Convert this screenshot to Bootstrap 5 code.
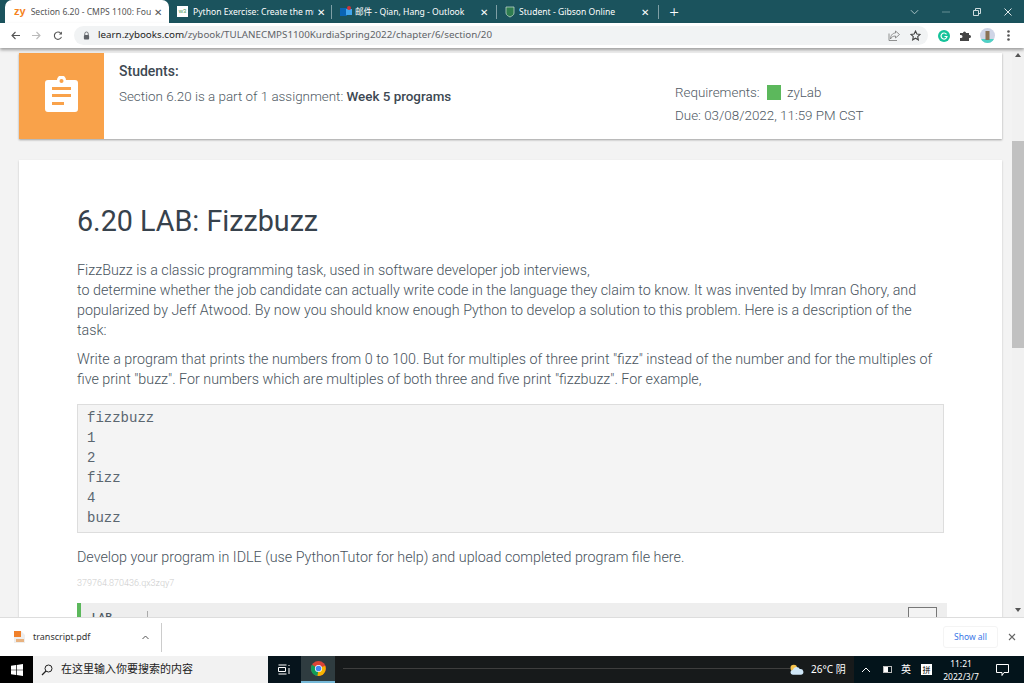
<!DOCTYPE html>
<html lang="en">
<head>
<meta charset="utf-8">
<title>6.20 LAB: Fizzbuzz</title>
<link href="https://cdn.jsdelivr.net/npm/bootstrap@5.3.0/dist/css/bootstrap.min.css" rel="stylesheet">
<style>
html,body{height:100%;overflow:hidden;margin:0}
body{font-family:"Liberation Sans",sans-serif;background:#f3f3f3}
.win{width:1024px;height:683px}
.tabstrip{height:23px;background:#1b535d;color:#fff;font-family:"Noto Sans","Noto Sans CJK SC",sans-serif;font-size:8.600px;flex:none}
.chrometab{height:23px;display:flex;align-items:center;position:relative;white-space:nowrap;overflow:hidden;flex:none}
.chrometab .ttl{overflow:hidden;flex:1;min-width:0;padding-top:1px}
.chrometab .cls{width:14px;font-size:10px;text-align:center;line-height:1;flex:none}
.t1{width:164px;margin-left:5px;padding:0 4px 0 9px;background:#fff;color:#555;border-radius:7px 7px 0 0}
.t1 .ttl{margin-left:5px}
.t2{width:162px;padding:0 3px 0 8px}
.t2 .ttl{margin-left:5px}
.t3{width:164px;padding:0 5px 0 8px}
.t3 .ttl{margin-left:3px}
.t4{width:161px;padding:0 6px 0 8px}
.t4 .ttl{margin-left:4px}
.w3box{width:11px;height:11px;background:#fff;color:#4a9a5a;font-size:6px;line-height:11px;text-align:center;font-family:"Liberation Sans",sans-serif;flex:none}
.sepv{width:1px;height:14px;background:#7f9fa5;flex:none}
.plus{width:30px;text-align:center;font-size:17px;font-weight:300;line-height:1}
.winbtns{margin-left:auto;width:114px;padding-right:12px}
.toolbar{height:25px;background:#fff;flex:none;position:relative;z-index:3;box-shadow:0 2px 3px rgba(0,0,0,.35);padding:3px 0 0 11px}
.urlbar{width:854px;height:19px;margin-left:11px;background:#f1f3f4;border-radius:10px;font-family:"Noto Sans",sans-serif;font-size:9.800px;color:#5f6368;padding:0 7px 0 9px}
.urlbar b{font-weight:400;color:#222}
.viewport{flex:1;min-height:0;position:relative;overflow:hidden;background:#f3f3f3}
.pagecol{width:983px;margin-left:19px;font-family:Roboto,sans-serif;color:#4f5a64}
.infocard{height:86px;margin-top:5px;background:#fff;box-shadow:0 1px 2px rgba(0,0,0,.35)}
.orangebox{width:85px;background:#f9a24a;flex:none;padding-bottom:4px}
.infomain{width:556px;padding:9px 0 0 15px;font-size:13.400px;font-weight:300}
.infomain h6{font-size:14px;font-weight:500;margin:0 0 7px;line-height:18px;color:#3d4852}
.infomain strong{font-weight:500;color:#3d4852}
.inforeq{padding-top:28px;font-size:13.400px;font-weight:300;line-height:23px;padding-left:15px}
.greensq{display:inline-block;width:14px;height:15px;background:#5cb85c;vertical-align:-3px;margin:0 6px 0 4px}
.maincard{margin-top:21px;height:480px;background:#fff;box-shadow:0 1px 2px rgba(0,0,0,.2);padding:44px 58px 0 58px}
.maincard h1{font-size:28.700px;font-weight:400;line-height:34px;margin:0 0 22px;color:#37424c}
.bodytxt{font-size:14.300px;font-weight:300;line-height:20px;margin:0 0 9px;color:#48535d}
.bodylast{margin-bottom:15px}
.bodydev{margin-bottom:10px}
.codebox{width:867px;height:129px;background:#f4f4f4;border:1px solid #ddd;padding:3px 9px;font-family:"Liberation Mono",monospace;font-size:14px;line-height:20px;margin:0 0 14px;color:#5a6670;overflow:hidden}
.hashid{font-size:9px;color:#ccc;line-height:12px;font-weight:300;margin-bottom:14px}
.labbar{width:870px;height:30px;background:#eee;border-left:4px solid #5cb85c;padding:8px 0 0 11px;font-size:11px;line-height:14px;font-weight:500;position:relative}
.labsep{display:inline-block;width:1px;height:20px;background:#aaa;margin-left:35px;vertical-align:top}
.labchk{position:absolute;right:10px;top:4px;width:29px;height:22px;border:1px solid #777;background:#f3f3f3}
.vscroll{position:absolute;right:0;top:0;bottom:0;width:12px;background:#f1f1f1}
.vthumb{position:absolute;left:0;right:0;top:93px;height:207px;background:#c1c1c1}
.varr{position:absolute;left:3px;width:0;height:0;border-left:3px solid transparent;border-right:3px solid transparent}
.dlbar{height:39px;background:#fff;flex:none;position:relative;z-index:2;border-top:1px solid #ddd;font-family:"Noto Sans",sans-serif;font-size:9px;color:#333}
.dlitem{width:162px;height:29px;border-right:1px solid #ccc;padding-left:14px}
.showall{color:#3b78e7;border:1px solid #f4f4f4;border-radius:3px;padding:4px 10px;margin-right:3px;line-height:12px;font-size:8.500px}
.taskbar{height:27px;background:#06141c;flex:none;color:#fff;font-size:10px;font-family:"Noto Sans","Noto Sans CJK SC",sans-serif}
.startbtn{width:33px;flex:none;background:#000}
.searchbox{width:235px;flex:none;background:#f2f2f2;color:#222;font-size:11px;padding-left:8px}
.tkbtn{width:33px;flex:none}
.chromebtn{width:34px;flex:none;background:#2f3c40;border-bottom:2px solid #76b9d8}
.tkfill{flex:1;position:relative;background:#171a1b}
.tkline{position:absolute;left:8px;right:0;top:12px;height:1px;background:#3e3e3e}
.weather{width:64px;flex:none;background:#171a1b}
.tray{width:170px;flex:none;background:#03141b}
.clock{font-size:8.500px;line-height:13px;text-align:center;width:48px;margin-left:5px}
</style>
</head>
<body>
<div class="win d-flex flex-column">
  <div class="tabstrip d-flex align-items-center">
    <div class="chrometab t1">
      <span style="color:#f58220;font-weight:700;font-size:11px;font-family:'Liberation Sans'">zy</span>
      <span class="ttl">Section 6.20 - CMPS 1100: Fou</span><span class="cls">✕</span>
    </div>
    <div class="chrometab t2">
      <span class="w3box">w3</span>
      <span class="ttl">Python Exercise: Create the mu</span><span class="cls">✕</span>
    </div>
    <div class="sepv"></div>
    <div class="chrometab t3">
      <svg width="12" height="11" viewBox="0 0 12 11"><rect y="2" width="7" height="8" fill="#0a64b4"/><rect x="6" y="3" width="6" height="6" fill="#41a5ee"/><circle cx="9" cy="2" r="2" fill="#d13438"/></svg>
      <span class="ttl">邮件 - Qian, Hang - Outlook</span><span class="cls">✕</span>
    </div>
    <div class="sepv"></div>
    <div class="chrometab t4">
      <svg width="10" height="12" viewBox="0 0 10 12"><path d="M1 1h8v6c0 2-2 3-4 4-2-1-4-2-4-4z" fill="#2f7d4f" stroke="#cfe3d5" stroke-width=".7"/></svg>
      <span class="ttl">Student - Gibson Online</span><span class="cls">✕</span>
    </div>
    <div class="sepv"></div>
    <div class="plus">+</div>
    <div class="winbtns d-flex align-items-center justify-content-between">
      <svg width="9" height="6" viewBox="0 0 10 6"><path d="M1 1l4 4 4-4" fill="none" stroke="#b9cdd0"/></svg>
      <svg width="8" height="2" viewBox="0 0 9 2"><path d="M0 1h9" stroke="#6f969c"/></svg>
      <svg width="8" height="8" viewBox="0 0 8 8"><path d="M.5 2.500h5v5h-5zM2.500 2.500V.5h5v5H5.500" fill="none" stroke="#cfdcde"/></svg>
      <svg width="8" height="8" viewBox="0 0 8 8"><path d="M.5 .5l7 7M7.500 .5l-7 7" stroke="#dfe8e9"/></svg>
    </div>
  </div>

  <div class="toolbar d-flex">
    <div class="d-flex align-items-center" style="height:19px;gap:12px">
      <svg width="9" height="9" viewBox="0 0 9 9"><path d="M9 4.500H1M4.500 1L1 4.500 4.500 8" fill="none" stroke="#555" stroke-width="1.100"/></svg>
      <svg width="9" height="9" viewBox="0 0 9 9"><path d="M0 4.500h8M4.500 1L8 4.500 4.500 8" fill="none" stroke="#bbb" stroke-width="1.100"/></svg>
      <svg width="10" height="10" viewBox="0 0 11 11"><path d="M9.300 6.500A4 4 0 1 1 8.500 2.500" fill="none" stroke="#555" stroke-width="1.200"/><path d="M9.800 .6v3.300H6.500z" fill="#555"/></svg>
    </div>
    <div class="urlbar d-flex align-items-center">
      <svg width="7" height="9" viewBox="0 0 8 9" style="margin-right:8px"><path d="M2 4V2.500a2 2 0 0 1 4 0V4" fill="none" stroke="#5f6368"/><rect x="1" y="4" width="6" height="5" rx="1" fill="#5f6368"/></svg>
      <span><b>learn.zybooks.com</b>/zybook/TULANECMPS1100KurdiaSpring2022/chapter/6/section/20</span>
      <span class="ms-auto d-flex align-items-center" style="gap:10px">
        <svg width="12" height="11" viewBox="0 0 12 11"><path d="M7.500 1l4 3.500-4 3.500V6C5 6 3.500 7 2.500 9 2.500 5.500 4.500 3 7.500 3zM1 3.500v7h8" fill="none" stroke="#777" stroke-width=".8"/></svg>
        <svg width="11" height="11" viewBox="0 0 12 12"><path d="M6 1.200l1.500 3.200 3.500.4-2.600 2.400.7 3.500L6 8.900l-3.100 1.800.7-3.500L1 4.800l3.500-.4z" fill="none" stroke="#444" stroke-width="1.200"/></svg>
      </span>
    </div>
    <div class="d-flex align-items-center" style="height:19px;margin-left:10px;gap:10px">
      <svg width="12" height="12" viewBox="0 0 12 12"><circle cx="6" cy="6" r="6" fill="#15c39a"/><path d="M8.500 4.300A3 3 0 1 0 9 6.500H6.500" fill="none" stroke="#fff" stroke-width="1.200"/></svg>
      <svg width="11" height="11" viewBox="0 0 11 11"><path d="M0 3h3a1.500 1.500 0 0 1 3 0h3v2h.5a1.500 1.500 0 0 1 0 3H9v3H0V8h1a1.500 1.500 0 0 0 0-3H0z" fill="#444"/></svg>
      <svg width="15" height="15" viewBox="0 0 15 15" style="margin-left:-1px"><defs><clipPath id="avclip"><circle cx="7.500" cy="7.500" r="7.500"/></clipPath></defs><g clip-path="url(#avclip)"><rect width="15" height="15" fill="#cfd5e6"/><rect y="11" width="15" height="4" fill="#4fd1c5"/><rect x="5.500" y="3" width="4" height="9" fill="#8a7355"/></g></svg>
      <svg width="3" height="11" viewBox="0 0 3 11" style="margin-left:2px"><circle cx="1.500" cy="1.500" r="1.300" fill="#555"/><circle cx="1.500" cy="5.500" r="1.300" fill="#555"/><circle cx="1.500" cy="9.500" r="1.300" fill="#555"/></svg>
    </div>
  </div>

  <div class="viewport">
    <div class="pagecol">
      <div class="infocard d-flex">
        <div class="orangebox d-flex align-items-center justify-content-center">
          <svg width="33" height="36" viewBox="0 0 33 36"><path d="M3 4h9a4.500 4.500 0 0 1 9 0h9a3 3 0 0 1 3 3v26a3 3 0 0 1-3 3H3a3 3 0 0 1-3-3V7a3 3 0 0 1 3-3z" fill="#fff"/><circle cx="16.500" cy="5" r="2" fill="#f9a24a"/><rect x="7" y="11" width="19" height="3" fill="#f9a24a"/><rect x="7" y="18" width="19" height="3" fill="#f9a24a"/><rect x="7" y="26" width="12" height="3" fill="#f9a24a"/></svg>
        </div>
        <div class="infomain">
          <h6>Students:</h6>
          <div>Section 6.20 is a part of 1 assignment: <strong>Week 5 programs</strong></div>
        </div>
        <div class="inforeq">
          <div>Requirements: <span class="greensq"></span>zyLab</div>
          <div>Due: 03/08/2022, 11:59 PM CST</div>
        </div>
      </div>
      <div class="maincard">
        <h1>6.20 LAB: Fizzbuzz</h1>
        <p class="bodytxt">FizzBuzz is a classic programming task, used in software developer job interviews,<br>to determine whether the job candidate can actually write code in the language they claim to know. It was invented by Imran Ghory, and popularized by Jeff Atwood. By now you should know enough Python to develop a solution to this problem. Here is a description of the task:</p>
        <p class="bodytxt bodylast">Write a program that prints the numbers from 0 to 100. But for multiples of three print "fizz" instead of the number and for the multiples of five print "buzz". For numbers which are multiples of both three and five print "fizzbuzz". For example,</p>
        <pre class="codebox">fizzbuzz
1
2
fizz
4
buzz</pre>
        <p class="bodytxt bodydev">Develop your program in IDLE (use PythonTutor for help) and upload completed program file here.</p>
        <div class="hashid">379764.870436.qx3zqy7</div>
        <div class="labbar">LAB<span class="labsep"></span><span class="labchk"></span></div>
      </div>
    </div>
    <div class="vscroll">
      <div class="varr" style="top:5px;border-bottom:4px solid #555"></div>
      <div class="vthumb"></div>
      <div class="varr" style="bottom:5px;border-top:4px solid #555"></div>
    </div>
  </div>

  <div class="dlbar d-flex align-items-center">
    <div class="dlitem d-flex align-items-center">
      <svg width="11" height="12" viewBox="0 0 11 12"><path d="M0 0h7l4 4v8H0z" fill="#eee"/><rect width="7" height="6" fill="#f0802a"/><rect x="2" y="8" width="8" height="3" fill="#e8b27f"/></svg>
      <span class="ms-2">transcript.pdf</span>
      <svg class="ms-auto" style="margin-right:12px" width="7" height="5" viewBox="0 0 7 5"><path d="M.5 4l3-3 3 3" fill="none" stroke="#555"/></svg>
    </div>
    <div class="ms-auto showall">Show all</div>
    <svg style="margin:0 8px 0 7px" width="8" height="8" viewBox="0 0 8 8"><path d="M1 1l6 6M7 1l-6 6" stroke="#666" stroke-width="1.100"/></svg>
  </div>

  <div class="taskbar d-flex">
    <div class="startbtn d-flex align-items-center justify-content-center">
      <svg width="12" height="12" viewBox="0 0 12 12"><path d="M0 1.700l5-.7v4.700H0zM5.700 .9L12 0v5.700H5.700zM0 6.300h5V11l-5-.7zM5.700 6.300H12V12l-6.300-.9z" fill="#fff"/></svg>
    </div>
    <div class="searchbox d-flex align-items-center">
      <svg width="12" height="12" viewBox="0 0 12 12" class="me-2"><circle cx="7.500" cy="4.500" r="3.500" fill="none" stroke="#222"/><path d="M5 7l-4 4" stroke="#222" stroke-width="1.200"/></svg>
      <span>在这里输入你要搜索的内容</span>
    </div>
    <div class="tkbtn d-flex align-items-center justify-content-center">
      <svg width="13" height="11" viewBox="0 0 13 11"><path d="M.5 1h8M.5 10h8M.5 3.500h7v4h-7zM11 1v1M11 4v6" fill="none" stroke="#fff"/></svg>
    </div>
    <div class="chromebtn d-flex align-items-center justify-content-center">
      <svg width="15" height="15" viewBox="0 0 16 16"><circle cx="8" cy="8" r="8" fill="#db4437"/><path d="M8 8L1 4a8 8 0 0 0 6 12z" fill="#0f9d58"/><path d="M8 8l7-3a8 8 0 0 1-8 11z" fill="#f4b400"/><circle cx="8" cy="8" r="3.800" fill="#fff"/><circle cx="8" cy="8" r="3" fill="#4285f4"/></svg>
    </div>
    <div class="tkfill"><div class="tkline"></div></div>
    <div class="weather d-flex align-items-center">
      <svg width="14" height="11" viewBox="0 0 15 11" style="margin-right:7px"><circle cx="4" cy="4" r="3.500" fill="#f6c34c"/><path d="M3 11a2.500 2.500 0 0 1 0-5 4 4 0 0 1 7.500-1A3 3 0 0 1 12 11z" fill="#cfe6f7"/></svg>
      <span>26°C 阴</span>
    </div>
    <div class="tray d-flex align-items-center">
      <svg style="margin-left:7px" width="10" height="6" viewBox="0 0 10 6"><path d="M1 5l4-4 4 4" fill="none" stroke="#fff"/></svg>
      <svg style="margin-left:12px" width="10" height="7" viewBox="0 0 10 7"><rect x=".5" y=".5" width="8" height="6" fill="none" stroke="#bbb"/><rect x="1" y="1" width="4" height="5" fill="#fff"/></svg>
      <span style="margin-left:8px">英</span>
      <span style="background:#fff;color:#000;width:11px;height:11px;font-size:8px;line-height:11px;text-align:center;margin-left:10px">拼</span>
      <div class="clock">11:21<br>2022/3/7</div>
      <svg style="margin-left:11px" width="13" height="12" viewBox="0 0 13 12"><path d="M.5 .5h12v8H8l-2 3v-3H.5z" fill="none" stroke="#fff"/></svg>
    </div>
  </div>
</div>
</body>
</html>
